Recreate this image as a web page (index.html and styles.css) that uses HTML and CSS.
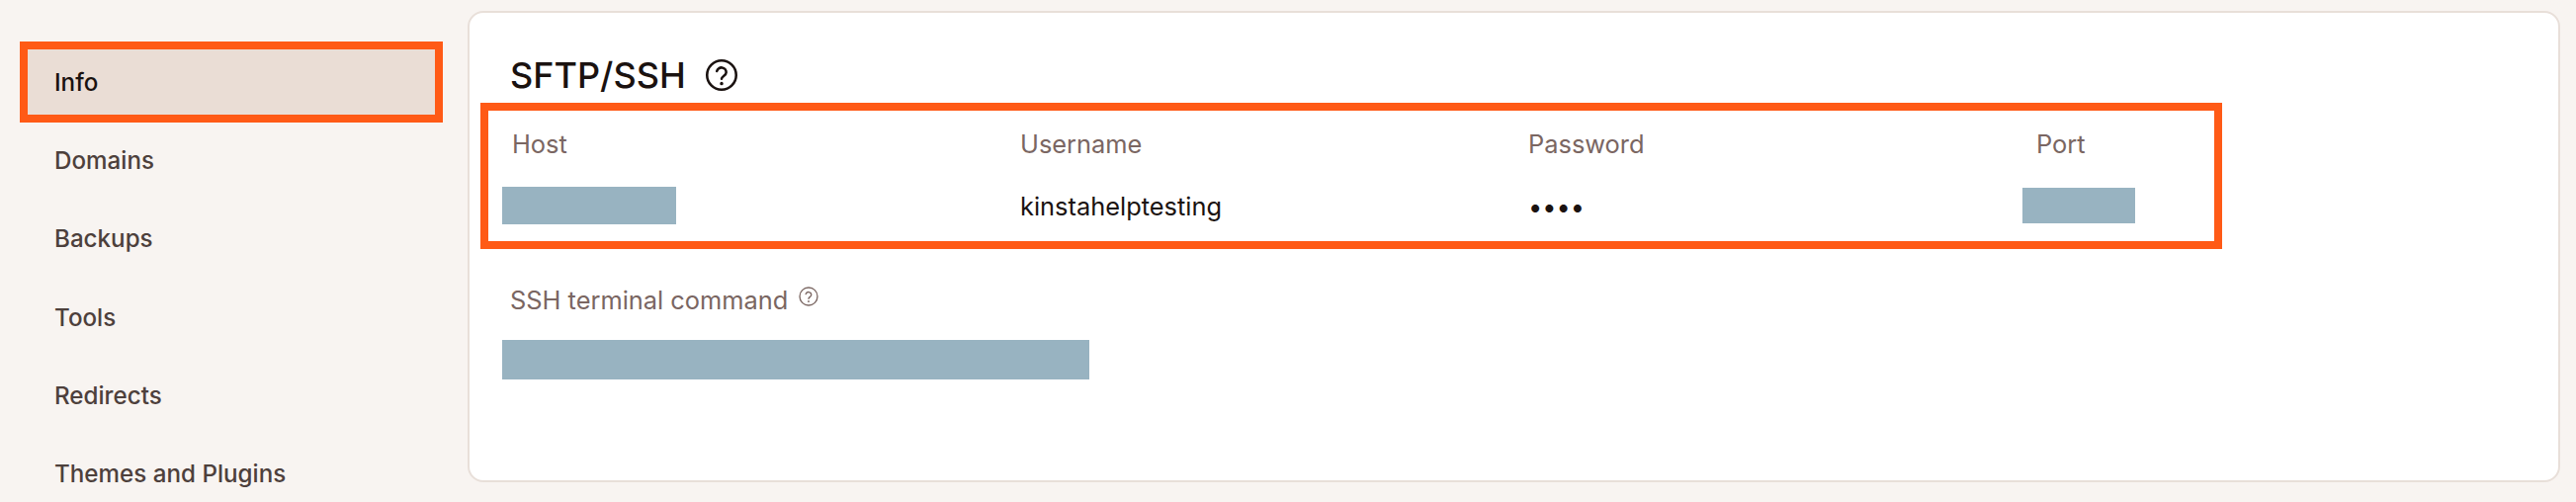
FILE: index.html
```html
<!DOCTYPE html>
<html lang="en">
<head>
    <meta charset="UTF-8">
    <title>SFTP/SSH Info</title>
    <link rel="stylesheet" href="styles.css">
</head>
<body>
    <div class="page">
        <nav class="sidebar">
            <a class="nav-item active">Info</a>
            <a class="nav-item">Domains</a>
            <a class="nav-item">Backups</a>
            <a class="nav-item">Tools</a>
            <a class="nav-item">Redirects</a>
            <a class="nav-item">Themes and Plugins</a>
        </nav>
        <main class="card">
            <div class="card-title">
                <h1>SFTP/SSH</h1>
                <svg class="help-icon" viewBox="0 0 24 24" fill="none" stroke="currentColor" stroke-width="1.8" stroke-linecap="round" stroke-linejoin="round">
                    <circle cx="12" cy="12" r="10.4"/>
                    <path d="M8.6 9.2a3.4 3.4 0 0 1 6.7.9c0 2.3-3.3 2.9-3.3 4.6"/>
                    <path d="M12 18v.1" stroke-width="2.4"/>
                </svg>
            </div>
            <div class="credentials">
                <div class="label">Host</div>
                <div class="label">Username</div>
                <div class="label">Password</div>
                <div class="label">Port</div>
                <div class="redacted redacted-host"></div>
                <div class="value">kinstahelptesting</div>
                <div class="value dots">••••</div>
                <div class="redacted redacted-port"></div>
            </div>
            <div class="ssh-label">
                <span>SSH terminal command</span>
                <svg class="help-icon small" viewBox="0 0 24 24" fill="none" stroke="currentColor" stroke-width="1.6" stroke-linecap="round" stroke-linejoin="round">
                    <circle cx="12" cy="12" r="10.8"/>
                    <path d="M8.6 9.2a3.4 3.4 0 0 1 6.7.9c0 2.3-3.3 2.9-3.3 4.6"/>
                    <path d="M12 18v.1" stroke-width="2.2"/>
                </svg>
            </div>
            <div class="redacted redacted-ssh"></div>
        </main>
    </div>
</body>
</html>
```

FILE: styles.css
```css
body {
    margin: 0;
    padding: 0;
    font-family: 'Inter', sans-serif;
    background: #f8f4f1;
    height: 508px;
    overflow: hidden;
}
.page {
    display: flex;
    height: 508px;
}
.sidebar {
    width: 428px;
    margin-left: 20px;
    margin-right: 25px;
    padding-top: 43px;
    flex-shrink: 0;
}
.nav-item {
    display: flex;
    align-items: center;
    box-sizing: border-box;
    height: 79.2px;
    padding-left: 27px;
    border: 8px solid transparent;
    font-size: 24.2px;
    font-weight: 500;
    color: #4d403c;
}
.nav-item.active {
    height: 82px;
    margin: -1px 0 -0.8px;
    background: #eaddd5;
    border-color: #ff5a16;
    color: #1a1210;
}
.card {
    box-sizing: border-box;
    width: 2117px;
    height: 477px;
    margin-top: 11px;
    padding: 39px 11px 0;
    background: #fff;
    border: 2px solid #e8dfd9;
    border-radius: 16px;
}
.card-title {
    display: flex;
    align-items: center;
    gap: 19px;
    height: 48px;
    padding-left: 30px;
}
.card-title h1 {
    margin: 0;
    font-size: 36px;
    font-weight: 500;
    color: #1a1210;
}
.help-icon {
    width: 34px;
    height: 34px;
    color: #1a1210;
}
.help-icon.small {
    width: 20px;
    height: 20px;
    color: #7a6662;
    margin-top: -6px;
}
.credentials {
    box-sizing: border-box;
    display: grid;
    grid-template-columns: 514px 514px 514px 1fr;
    grid-template-rows: 66px 60px;
    align-items: center;
    width: 1762px;
    height: 148px;
    margin-top: 4px;
    padding: 0 0 0 24px;
    border: 8px solid #ff5a16;
}
.label {
    font-size: 25.4px;
    font-weight: 400;
    color: #7a6662;
}
.value {
    font-size: 25.4px;
    font-weight: 400;
    color: #1a1210;
}
.redacted {
    background: #98b3c1;
}
.redacted-host {
    width: 176px;
    height: 38px;
    margin-left: -10px;
}
.redacted-port {
    width: 114px;
    height: 36px;
    margin-left: -14px;
}
.ssh-label {
    display: flex;
    align-items: center;
    gap: 11px;
    height: 36px;
    margin-top: 33px;
    padding-left: 30px;
    font-size: 25.4px;
    font-weight: 400;
    color: #7a6662;
}
.redacted-ssh {
    width: 594px;
    height: 40px;
    margin-top: 23px;
    margin-left: 22px;
}
```
